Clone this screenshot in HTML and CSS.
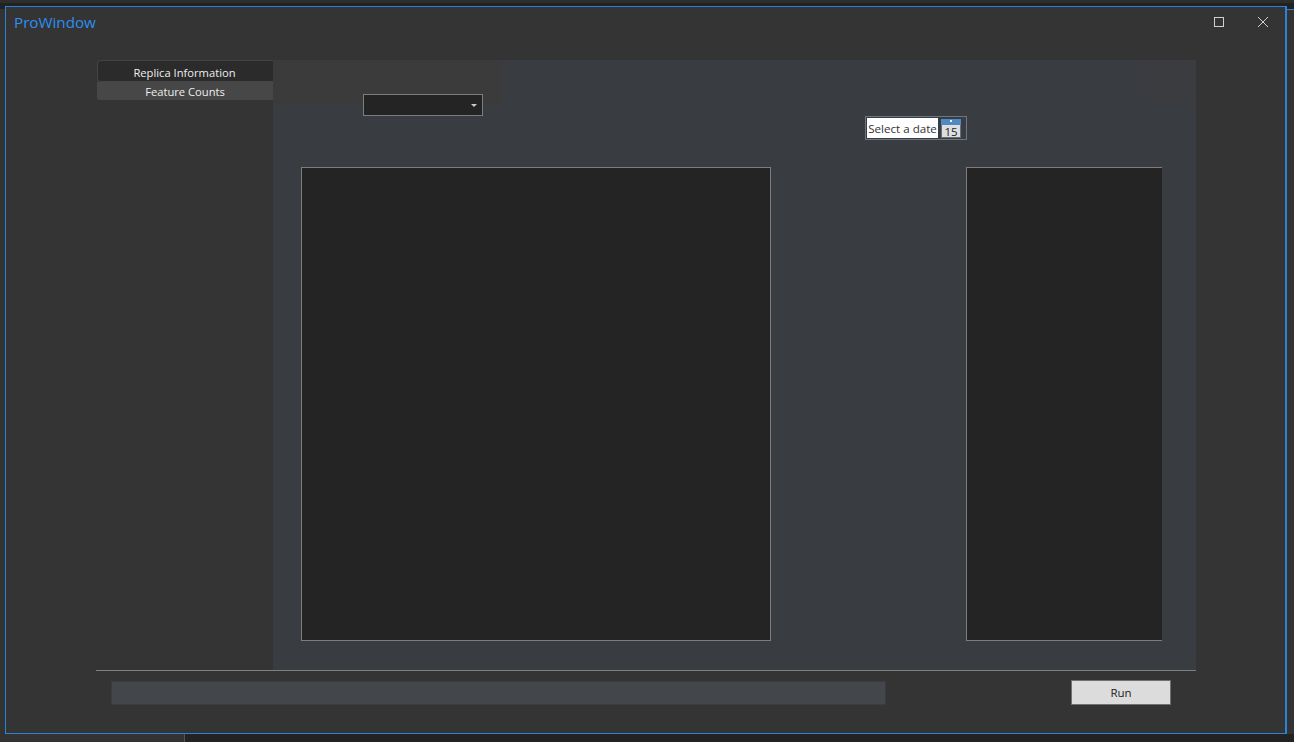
FILE: index.html
```html
<!DOCTYPE html>
<html lang="en">
<head>
<meta charset="UTF-8">
<meta name="viewport" content="width=device-width, initial-scale=1.0">
<title>ProWindow</title>
<link rel="stylesheet" href="styles.css">
</head>
<body>

<div class="window">
  <div class="titlebar">
    <span class="title">ProWindow</span>
    <div class="window-btns">
      <svg class="btn-max" width="10" height="10" viewBox="0 0 10 10"><rect x="0.5" y="0.5" width="9" height="9" fill="none" stroke="#d0d0d0"/></svg>
      <svg class="btn-close" width="12" height="12" viewBox="0 0 12 12"><path d="M1 1 L11 11 M11 1 L1 11" stroke="#d0d0d0" fill="none"/></svg>
    </div>
  </div>

  <div class="content">
    <div class="tabs">
      <div class="tab active">Replica Information</div>
      <div class="tab">Feature Counts</div>
    </div>
    <div class="panel">
      <div class="panel-top">
        <div class="combo"><span class="combo-arrow"></span></div>
        <div class="date-picker">
          <span class="date-text">Select a date</span>
          <svg class="cal" width="20" height="19" viewBox="0 0 20 19">
            <rect x="0" y="0" width="20" height="19" fill="#6a6f75"/>
            <rect x="0" y="0" width="20" height="6" fill="#4f8ac4"/>
            <rect x="9" y="1" width="2" height="2" fill="#e8eef4"/>
            <rect x="1" y="6" width="18" height="12" fill="#dcdee0"/>
            <text x="10" y="17" class="cal-day">15</text>
          </svg>
        </div>
      </div>
      <div class="lists">
        <div class="list list-left"></div>
        <div class="list list-right"></div>
      </div>
    </div>
  </div>

  <div class="footer">
    <div class="progress"></div>
    <button class="run-btn">Run</button>
  </div>
</div>
<div class="behind"></div>

</body>
</html>
```

FILE: styles.css
```css
html, body {
  height: 100%;
}
body {
  margin: 0;
  padding: 6px 0 0 5px;
  box-sizing: border-box;
  background-color: #333;
  font-family: "Open Sans", "Liberation Sans", sans-serif;
  overflow: hidden;
}
/* other windows showing round the edges of the dialog */
body::before {
  content: "";
  position: absolute;
  left: 0;
  right: 0;
  top: 0;
  height: 6px;
  background-color: #222;
  border-top: 3px solid #2d2d2d;
}
body::after {
  content: "";
  position: absolute;
  right: 0;
  top: 9px;
  width: 7px;
  height: 1px;
  background-color: #2a83d8;
}
.window {
  position: relative;
  width: 1282px;
  height: 728px;
  box-sizing: border-box;
  background-color: #343434;
  border: 1px solid #2a83d8;
  border-right-width: 2px;
  display: flex;
  flex-direction: column;
}
.behind {
  height: 8px;
  margin-left: 179px;
  background-color: #232323;
  border-left: 1px solid #555;
}
.titlebar {
  height: 53px;
  flex: none;
  display: flex;
  justify-content: space-between;
  padding: 5px 16px 0 8px;
  box-sizing: border-box;
}
.title {
  color: #2b90f0;
  font-size: 15.2px;
  line-height: 20px;
}
.window-btns {
  display: flex;
  gap: 33px;
  padding-top: 5px;
}
.btn-close {
  margin-top: -1px;
}
.content {
  height: 610px;
  flex: none;
  margin: 0 89px 0 91px;
  display: flex;
}
.tabs {
  width: 176px;
  flex: none;
}
.tab {
  height: 18px;
  line-height: 20px;
  color: #eee;
  font-size: 11.2px;
  text-align: center;
  background-color: #474747;
  border-radius: 0 0 0 3px;
}
.tab.active {
  height: 22px;
  line-height: 24px;
  background-color: #2b2b2b;
  border: 1px solid #444;
  border-right: none;
  border-radius: 4px 0 0 4px;
  box-sizing: border-box;
  padding-right: 2px;
}
.panel {
  flex: 1;
  background-color: #393c40;
  display: flex;
  flex-direction: column;
  position: relative;
}
/* lighter patch over the top left corner of the panel */
.panel::before {
  content: "";
  position: absolute;
  left: 0;
  top: 0;
  width: 229px;
  height: 45px;
  background-color: #3b3b3b;
}
.panel::after {
  content: "";
  position: absolute;
  right: 0;
  top: 0;
  width: 56px;
  height: 45px;
  background-color: #3a3c3f;
}
.panel-top {
  height: 107px;
  flex: none;
  position: relative;
  z-index: 1;
}
.combo {
  position: absolute;
  left: 90px;
  top: 34px;
  width: 120px;
  height: 22px;
  box-sizing: border-box;
  background-color: #242425;
  border: 1px solid #7d7d7d;
}
.combo-arrow {
  position: absolute;
  right: 5px;
  top: 9px;
  border-left: 3px solid transparent;
  border-right: 3px solid transparent;
  border-top: 3px solid #ccc;
}
.date-picker {
  position: absolute;
  left: 592px;
  top: 56px;
  width: 102px;
  height: 24px;
  box-sizing: border-box;
  border: 1px solid #6c7782;
  padding: 1px 0 0 1px;
  display: flex;
  gap: 3px;
}
.date-text {
  flex: none;
  width: 71px;
  height: 20px;
  background-color: #fff;
  color: #333;
  font-size: 11.6px;
  line-height: 22px;
  text-align: center;
  white-space: nowrap;
}
.cal {
  flex: none;
  margin-top: 1px;
}
.cal-day {
  font-family: "Open Sans", "Liberation Sans", sans-serif;
  font-size: 11.5px;
  fill: #222;
  text-anchor: middle;
}
.lists {
  display: flex;
  padding-left: 28px;
  gap: 195px;
}
.list {
  height: 474px;
  box-sizing: border-box;
  background-color: #242425;
  border: 1px solid #7d7d7d;
}
.list-left {
  width: 470px;
}
.list-right {
  width: 196px;
  border-right: none;
}
.footer {
  flex: 1;
  margin: 0 89px 0 90px;
  border-top: 1px solid #808080;
  display: flex;
  justify-content: space-between;
  align-items: flex-start;
  padding: 9px 25px 0 15px;
}
.progress {
  width: 775px;
  height: 24px;
  margin-top: 1px;
  box-sizing: border-box;
  background-color: #43474b;
  border: 1px solid #3a3d40;
}
.run-btn {
  width: 100px;
  height: 25px;
  box-sizing: border-box;
  background-color: #dcdcdc;
  border: 1px solid #707070;
  color: #222;
  font-family: "Open Sans", "Liberation Sans", sans-serif;
  font-size: 11.5px;
  padding: 0;
}
```
